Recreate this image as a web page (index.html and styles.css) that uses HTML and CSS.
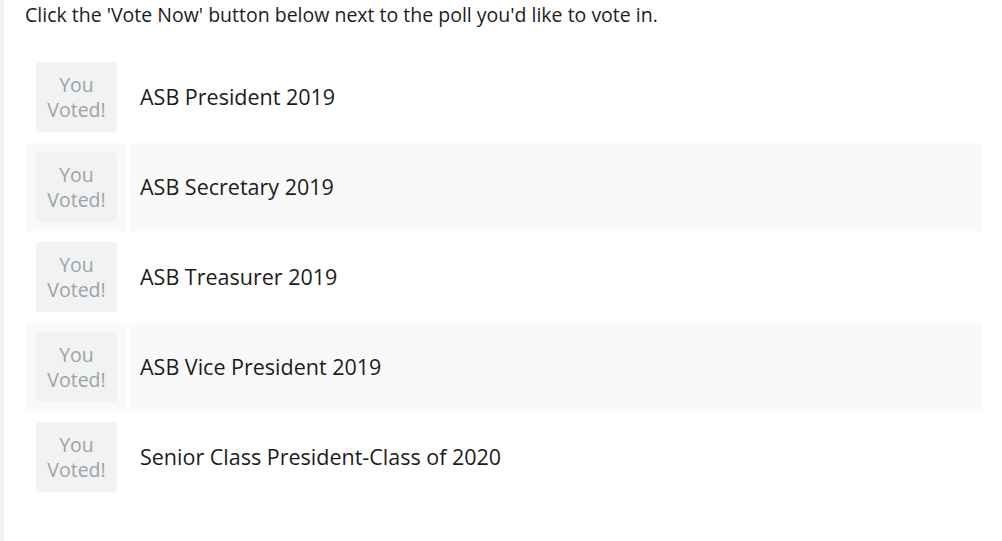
FILE: index.html
```html
<!DOCTYPE html>
<html>
<head>
<meta charset="utf-8">
<link rel="stylesheet" href="styles.css">
</head>
<body>
<div class="page">
  <p class="intro">Click the 'Vote Now' button below next to the poll you'd like to vote in.</p>
  <table class="polls">
    <tr>
      <td class="btn-cell"><span class="voted">You Voted!</span></td>
      <td class="title">ASB President 2019</td>
    </tr>
    <tr class="alt">
      <td class="btn-cell"><span class="voted">You Voted!</span></td>
      <td class="title">ASB Secretary 2019</td>
    </tr>
    <tr>
      <td class="btn-cell"><span class="voted">You Voted!</span></td>
      <td class="title">ASB Treasurer 2019</td>
    </tr>
    <tr class="alt">
      <td class="btn-cell"><span class="voted">You Voted!</span></td>
      <td class="title">ASB Vice President 2019</td>
    </tr>
    <tr>
      <td class="btn-cell"><span class="voted">You Voted!</span></td>
      <td class="title">Senior Class President-Class of 2020</td>
    </tr>
  </table>
</div>
</body>
</html>
```
FILE: styles.css
```css
html, body {
  margin: 0;
  padding: 0;
  background: #fff;
}
body {
  font-family: "Open Sans", "Noto Sans", sans-serif;
  color: #1c1c1c;
}
.page {
  border-left: 4px solid #f2f2f2;
  padding: 0 20px 0 20px;
  min-height: 541px;
  box-sizing: border-box;
}
.intro {
  margin: 0;
  padding: 2px 0 0 1px;
  font-size: 19.5px;
  line-height: 26px;
}
.polls {
  margin-top: 23px;
  width: 960px;
  border-spacing: 2px;
}
.polls td {
  padding: 9px 10px;
  vertical-align: middle;
}
.polls tr.alt td {
  background: #f9f9f9;
}
.btn-cell {
  width: 81px;
}
.voted {
  display: flex;
  align-items: center;
  justify-content: center;
  width: 81px;
  height: 70px;
  box-sizing: border-box;
  background: #f2f2f2;
  border-radius: 4px;
  color: #99a4aa;
  font-size: 19.5px;
  line-height: 25px;
  text-align: center;
}
.title {
  font-size: 21.5px;
  padding-left: 11px !important;
  padding-bottom: 11px !important;
}
```
